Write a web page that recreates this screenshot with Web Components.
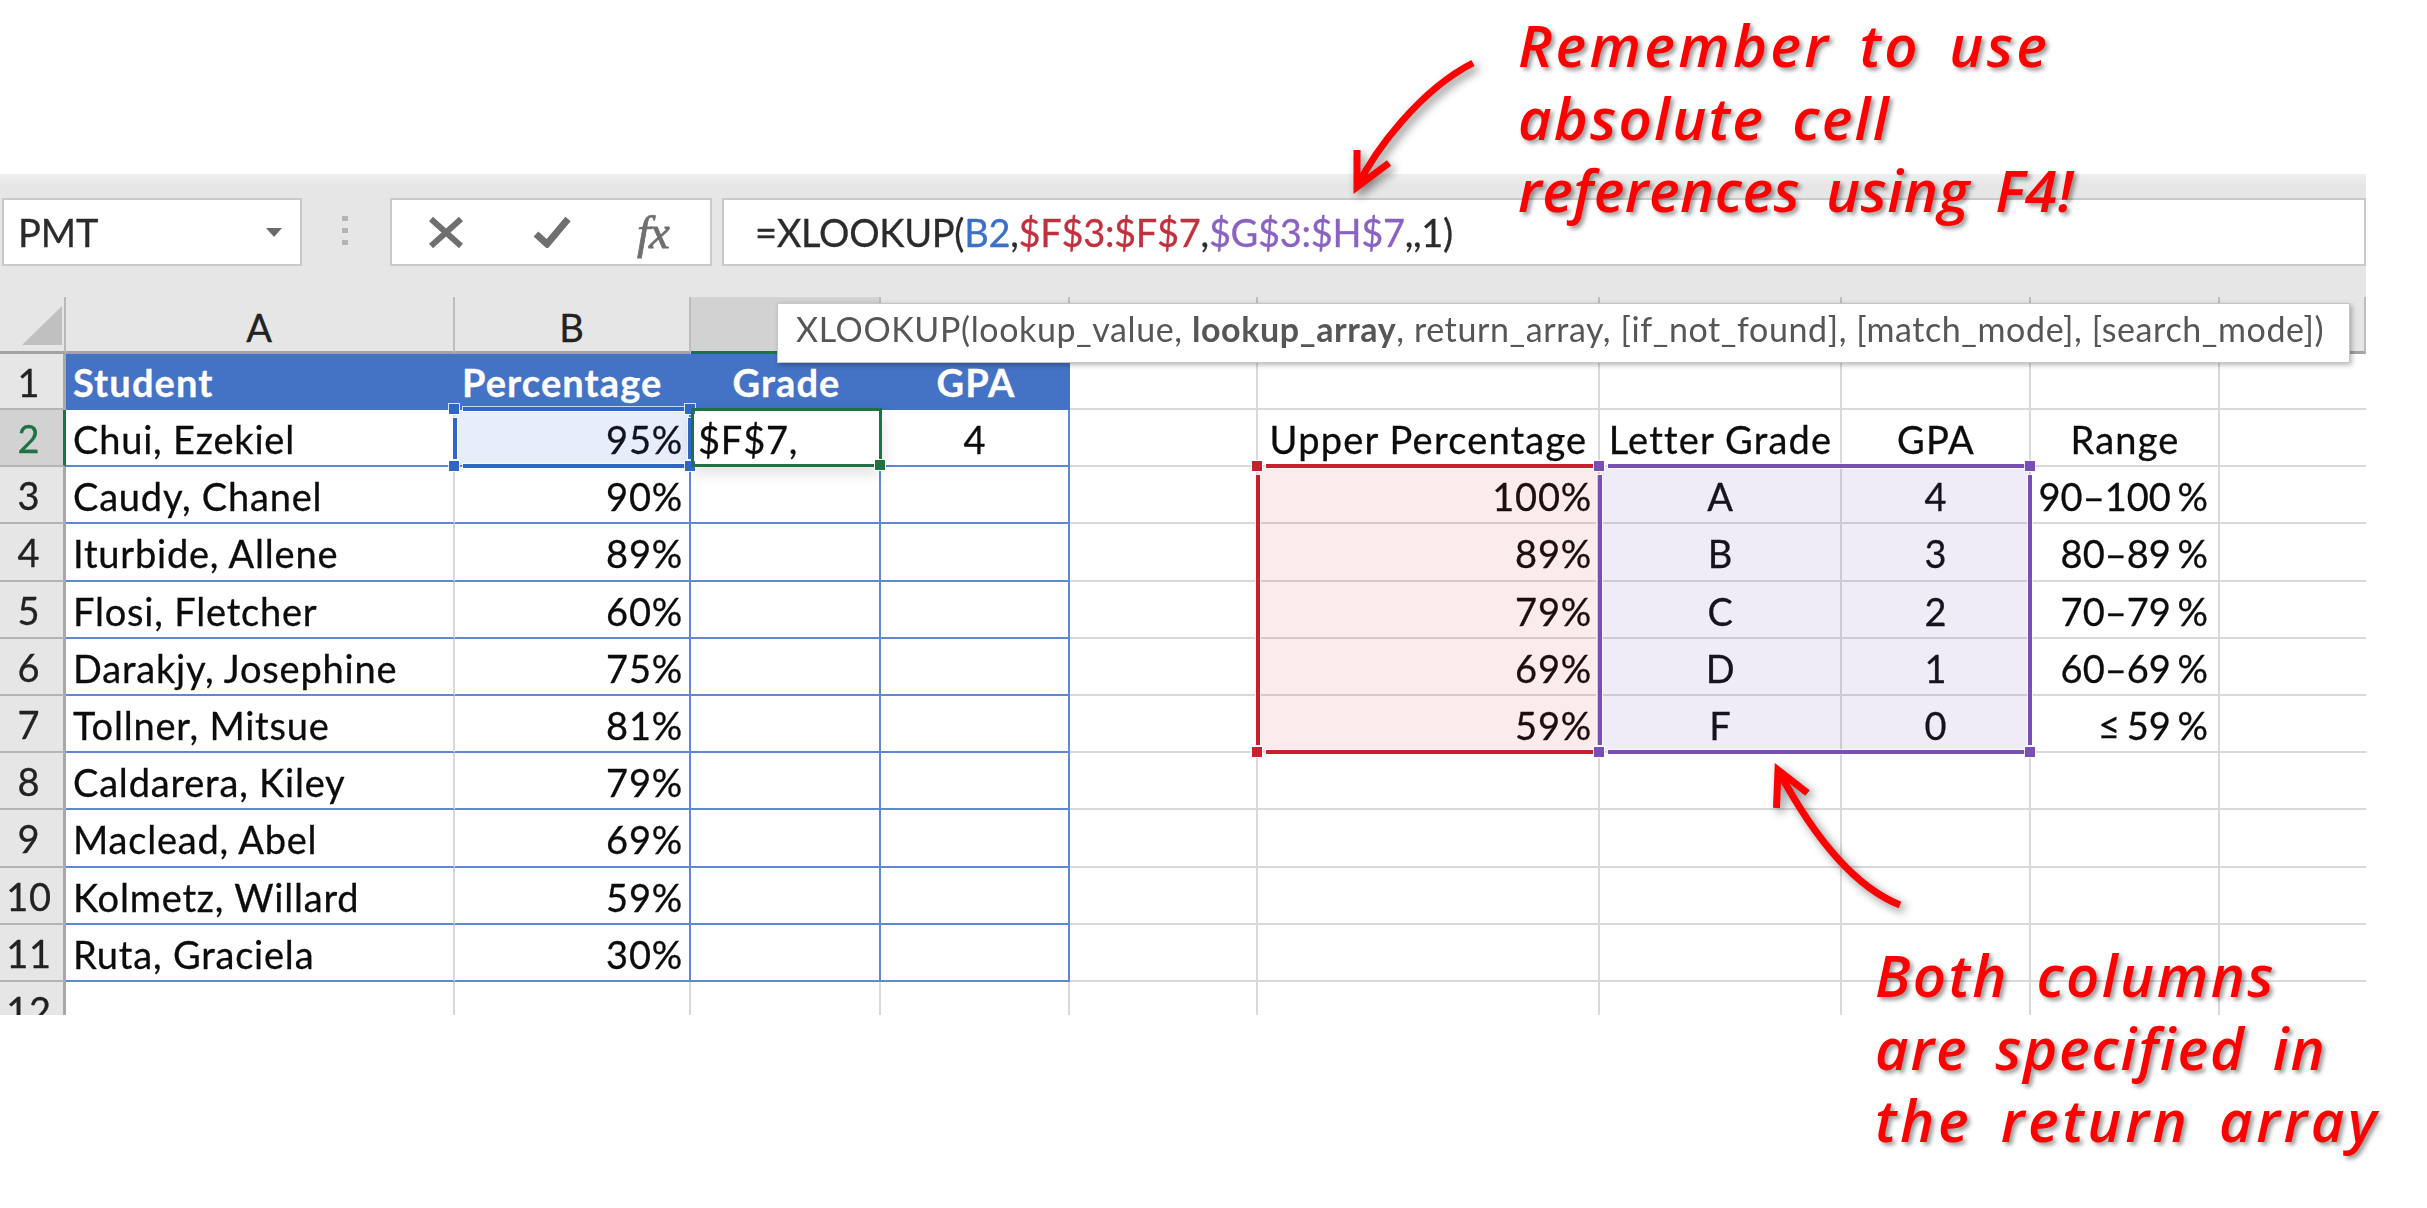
<!DOCTYPE html>
<html>
<head>
<meta charset="utf-8">
<title>XLOOKUP</title>
<style>
  html, body { margin: 0; background: #fff; }
  body { font-family: "Lato", "Liberation Sans", sans-serif; }
</style>
</head>
<body>
<xl-page>
  <xl-formula-bar></xl-formula-bar>
  <xl-sheet></xl-sheet>
  <xl-hint></xl-hint>
  <xl-arrow kind="top"></xl-arrow>
  <xl-arrow kind="bottom"></xl-arrow>
  <xl-note style="left:1518px;top:9px">
    <span style="letter-spacing:3.300px">Remember to use</span>
    <span style="letter-spacing:2.200px">absolute cell</span>
    <span style="letter-spacing:.5px">references using F4!</span>
  </xl-note>
  <xl-note style="left:1875px;top:939px">
    <span style="letter-spacing:2.400px">Both columns</span>
    <span style="letter-spacing:1.800px">are specified in</span>
    <span style="letter-spacing:3.600px">the return array</span>
  </xl-note>
</xl-page>

<script>
// page shell, keeps the free-floating callouts relative to the picture
class XlPage extends HTMLElement {
  constructor() {
    super();
    this.attachShadow({ mode: 'open' }).innerHTML = `
      <style>
        :host { display: block; position: relative; width: 2427px; height: 1208px; overflow: hidden;
                padding-top: 174px; box-sizing: border-box; background: #fff; }
      </style>
      <slot></slot>`;
  }
}

class XlFormulaBar extends HTMLElement {
  constructor() {
    super();
    this.attachShadow({ mode: 'open' }).innerHTML = `
      <style>
        :host { display: flex; box-sizing: border-box; width: 2366px; height: 123px; padding: 24px 0 31px 2px;
                background: linear-gradient(#efefef, #e6e6e6 12px); color: #2b2b2b; filter: blur(.4px);
                font: 38px/64px "Lato", "Liberation Sans", sans-serif; letter-spacing: -.3px; -webkit-text-stroke: .3px; }
        .box { box-sizing: border-box; background: #fff; border: 2px solid #c9c9c9; height: 68px; }
        .name { width: 300px; display: flex; justify-content: space-between; align-items: center; padding: 0 18px 0 14px; letter-spacing: 0; }
        .name svg { display: block; }
        .dots { width: 88px; display: flex; flex-direction: column; gap: 7px; align-items: center; padding: 18px 3px 0 0; box-sizing: border-box; }
        .dots i { width: 6px; height: 5px; background: #b4b4b4; }
        .btns { width: 322px; display: flex; align-items: center; }
        .btns svg { display: block; }
        .fx { font: italic 400 47px/60px "Liberation Serif", serif; color: #6f6f6f; letter-spacing: -1px; margin-left: 66px; -webkit-text-stroke: .8px; }
        .input { flex: 1; margin-left: 10px; padding-left: 31px; white-space: nowrap; }
        .b { color: #3b70c6; } .r { color: #c2303d; } .p { color: #8b62c2; }
      </style>
      <div class="box name"><span>PMT</span>
        <svg width="16" height="9" viewBox="0 0 16 9"><path d="M0 0H16L8 9Z" fill="#6b6b6b"/></svg>
      </div>
      <div class="dots"><i></i><i></i><i></i></div>
      <div class="box btns">
        <svg width="34" height="31" viewBox="0 0 34 31" style="margin-left:37px"><path d="M2 2L32 29M32 2L2 29" stroke="#6f6f6f" stroke-width="6" fill="none"/></svg>
        <svg width="38" height="32" viewBox="0 0 38 32" style="margin-left:70px"><path d="M3 18L14 28L35 3" stroke="#6f6f6f" stroke-width="7" fill="none"/></svg>
        <span class="fx">fx</span>
      </div>
      <div class="box input">=XLOOKUP(<span class="b">B2</span>,<span class="r">$F$3:$F$7</span>,<span class="p">$G$3:$H$7</span>,,1)</div>`;
  }
}

// one coloured formula range, sits in a grid area of the sheet
class XlRange extends HTMLElement {
  constructor() {
    super();
    this.attachShadow({ mode: 'open' }).innerHTML = `
      <style>
        :host { display: block; position: relative; z-index: 2; pointer-events: none; }
        .fill { position: absolute; inset: 1px 0 1px 0; background: var(--fill); }
        .l { position: absolute; background: var(--c); box-shadow: 0 0 0 1px rgba(255,255,255,.7); }
        .top, .bot { left: 8px; right: 6px; height: 4px; }
        .top { top: -3px; } .bot { bottom: -1px; }
        .lft, .rgt { top: 8px; bottom: 8px; width: 4px; }
        .lft { left: -2px; } .rgt { right: -1px; }
        .h { position: absolute; width: 10px; height: 10px; background: var(--c); outline: 1px solid rgba(255,255,255,.8); }
        .tl { left: -6px; top: -6px; } .tr { right: -4px; top: -6px; }
        .bl { left: -6px; bottom: -4px; } .br { right: -4px; bottom: -4px; }
      </style>
      <div class="fill"></div>
      <div class="l top"></div><div class="l bot"></div><div class="l lft"></div><div class="l rgt"></div>
      <div class="h tl"></div><div class="h tr"></div><div class="h bl"></div><div class="h br"></div>`;
  }
}

class XlSheet extends HTMLElement {
  constructor() {
    super();
    this.attachShadow({ mode: 'open' });
  }

  connectedCallback() {
    const letters = ['A', 'B', 'C', '', '', '', '', '', '', ''];
    const students = [
      ['Chui, Ezekiel', '95%'], ['Caudy, Chanel', '90%'], ['Iturbide, Allene', '89%'],
      ['Flosi, Fletcher', '60%'], ['Darakjy, Josephine', '75%'], ['Tollner, Mitsue', '81%'],
      ['Caldarera, Kiley', '79%'], ['Maclead, Abel', '69%'], ['Kolmetz, Willard', '59%'],
      ['Ruta, Graciela', '30%']
    ];
    const grades = [
      ['100%', 'A', '4', '90–100 %'], ['89%', 'B', '3', '80–89 %'], ['79%', 'C', '2', '70–79 %'],
      ['69%', 'D', '1', '60–69 %'], ['59%', 'F', '0', '≤ 59 %']
    ];

    let html = `<div class="hd corner" style="grid-area:1/1"><svg width="40" height="39" viewBox="0 0 40 39"><path d="M0 39H40V0Z" fill="#c0c0c0"/></svg></div>`;
    letters.forEach((l, i) => {
      html += `<div class="hd col${i === 2 ? ' on' : ''}" style="grid-area:1/${i + 2}">${l}</div>`;
    });

    for (let r = 1; r <= 12; r++) {
      html += `<div class="hd row${r === 2 ? ' on' : ''}${r === 12 ? ' last' : ''}" style="grid-area:${r + 1}/1">${r}</div>`;
      for (let c = 0; c < 10; c++) {
        html += this.cell(r, c, students, grades);
      }
    }

    this.shadowRoot.innerHTML = `
      <style>
        :host { display: grid; width: 2366px; height: 718px; overflow: hidden; position: relative; color: #0c0c0c;
                grid-template-columns: 66px 389px 236px 190px 189px 188px 342px 242px 189px 189px 146px;
                grid-template-rows: 57px 56px repeat(10, 57.2px) 33px; filter: blur(.4px);
                font: 38px/57px "Lato", "Liberation Sans", sans-serif; letter-spacing: .8px; -webkit-text-stroke: .3px; }
        div { box-sizing: border-box; white-space: nowrap; }
        .hd { background: #e6e6e6; color: #222; text-align: center; }
        .corner { border-right: 2px solid #b9b9b9; border-bottom: 3px solid #a3a3a3; padding: 9px 0 0 19px; line-height: 0; }
        .col { border-right: 2px solid #bdbdbd; border-bottom: 3px solid #a3a3a3; padding-top: 2px; }
        .col.on { background: #d2d2d2; border-bottom-color: #1f7244; padding-left: 8px; }
        .row { border-right: 3px solid #a8a8a8; border-bottom: 2px solid #b4b4b4; padding-right: 5px; overflow: hidden; }
        .row.on { background: #d2d2d2; color: #1f7244; border-right-color: #1f7244; }
        .row.last { border-bottom: 0; }
        .c { border-right: 2px solid #d9d9d9; border-bottom: 2px solid #d9d9d9; padding: 1px 6px 0 7px; }
        .c.end { border-right: 0; }
        .c.nb { border-bottom: 0; }
        .c.t { border-bottom: 2px solid #5f87d2; }
        .c.v { border-right: 2px solid #5f87d2; }
        .c.h { background: #4472c4; color: #fff; font-weight: 700; border: 0; padding-top: 0; text-align: center; letter-spacing: 1.1px; }
        .c.h.lf { text-align: left; }
        .ri { text-align: right; } .ce { text-align: center; }
        .tt { letter-spacing: 1.2px; }
        .rng { text-align: right; padding-right: 10px; letter-spacing: 0; word-spacing: -3px; }
        .active { background: #fff; box-shadow: 0 5px 16px rgba(0,0,0,.14); position: relative; z-index: 1; }
        xl-range.red  { --c: #c8202f; --fill: rgba(200,32,47,.09); grid-row: 4 / span 5; grid-column: 7; }
        xl-range.pur  { --c: #7a4fb5; --fill: rgba(122,79,181,.11); grid-row: 4 / span 5; grid-column: 8 / span 2; }
        xl-range.blue { --c: #2f68c4; --fill: rgba(47,104,196,.11); grid-row: 3; grid-column: 3; }
        .green { grid-row: 3; grid-column: 4; position: relative; z-index: 3; margin: -2px -1px 0 0; border: 3px solid #1f7244; }
        .green i { position: absolute; right: -6px; bottom: -6px; width: 10px; height: 10px; background: #1f7244; outline: 1px solid #fff; }
      </style>
      ${html}
      <xl-range class="red"></xl-range>
      <xl-range class="pur"></xl-range>
      <xl-range class="blue"></xl-range>
      <div class="green"><i></i></div>`;
  }

  cell(r, c, students, grades) {
    const area = `style="grid-area:${r + 1}/${c + 2}"`;
    let cls = 'c' + (c === 9 ? ' end' : '') + (r === 12 ? ' nb' : '');
    let text = '';

    // student table, columns A to D
    if (r === 1 && c < 4) {
      return `<div class="c h${c < 2 ? ' lf' : ''}" ${area}>${['Student', 'Percentage', 'Grade', 'GPA'][c]}</div>`;
    }
    if (r >= 2 && r <= 11 && c < 4) {
      cls += ' t';
      if (c > 0) cls += ' v';
      if (c === 0) text = students[r - 2][0];
      if (c === 1) { text = students[r - 2][1]; cls += ' ri'; }
      if (r === 2 && c === 2) { text = '$F$7,'; cls += ' active'; }
      if (r === 2 && c === 3) { text = '4'; cls += ' ce'; }
    }

    // lookup table, columns F to I
    if (r === 2 && c >= 5 && c <= 8) {
      text = ['Upper Percentage', 'Letter Grade', 'GPA', 'Range'][c - 5];
      cls += ' ce tt';
    }
    if (r >= 3 && r <= 7 && c >= 5 && c <= 8) {
      text = grades[r - 3][c - 5];
      cls += c === 5 ? ' ri' : c === 8 ? ' rng' : ' ce';
    }
    return `<div class="${cls}" ${area}>${text}</div>`;
  }
}

class XlHint extends HTMLElement {
  constructor() {
    super();
    this.attachShadow({ mode: 'open' }).innerHTML = `
      <style>
        :host { position: absolute; left: 777px; top: 303px; width: 1573px; height: 60px; box-sizing: border-box; z-index: 5;
                background: #fff; border: 1px solid #c6c6c6; box-shadow: 2px 2px 5px rgba(0,0,0,.28); padding-left: 18px;
                color: #565656; font: 34px/49px "Lato", "Liberation Sans", sans-serif; letter-spacing: .6px; white-space: nowrap; }
        b { font-weight: 700; }
      </style>
      XLOOKUP(lookup_value, <b>lookup_array</b>, return_array, [if_not_found], [match_mode], [search_mode])`;
  }
}

class XlArrow extends HTMLElement {
  constructor() {
    super();
    this.attachShadow({ mode: 'open' });
  }

  connectedCallback() {
    const shapes = {
      top: { left: 1340, top: 50, w: 150, h: 150,
             d: 'M133 13C80 40 35 100 17 137M17 100L17 137L49 113' },
      bottom: { left: 1760, top: 755, w: 150, h: 160,
             d: 'M140 150C90 130 50 75 18 15M16.500 53L18 15L47.500 38' }
    };
    const s = shapes[this.getAttribute('kind')];
    this.shadowRoot.innerHTML = `
      <style>
        :host { position: absolute; left: ${s.left}px; top: ${s.top}px; width: ${s.w}px; height: ${s.h}px; z-index: 6; }
        svg { display: block; overflow: visible; filter: drop-shadow(4px 4px 5px rgba(0,0,0,.45)); }
      </style>
      <svg width="${s.w}" height="${s.h}" viewBox="0 0 ${s.w} ${s.h}">
        <path d="${s.d}" fill="none" stroke="#f00" stroke-width="7"/>
      </svg>`;
  }
}

class XlNote extends HTMLElement {
  constructor() {
    super();
    this.attachShadow({ mode: 'open' }).innerHTML = `
      <style>
        :host { position: absolute; z-index: 7; display: block; color: #f00; white-space: nowrap; word-spacing: 10px;
                font: italic 600 58px/72.500px "Open Sans", "Liberation Sans", sans-serif;
                text-shadow: 3px 3px 4px rgba(0,0,0,.4); }
        ::slotted(span) { display: block; }
      </style>
      <slot></slot>`;
  }
}

customElements.define('xl-page', XlPage);
customElements.define('xl-formula-bar', XlFormulaBar);
customElements.define('xl-range', XlRange);
customElements.define('xl-sheet', XlSheet);
customElements.define('xl-hint', XlHint);
customElements.define('xl-arrow', XlArrow);
customElements.define('xl-note', XlNote);
</script>
</body>
</html>
